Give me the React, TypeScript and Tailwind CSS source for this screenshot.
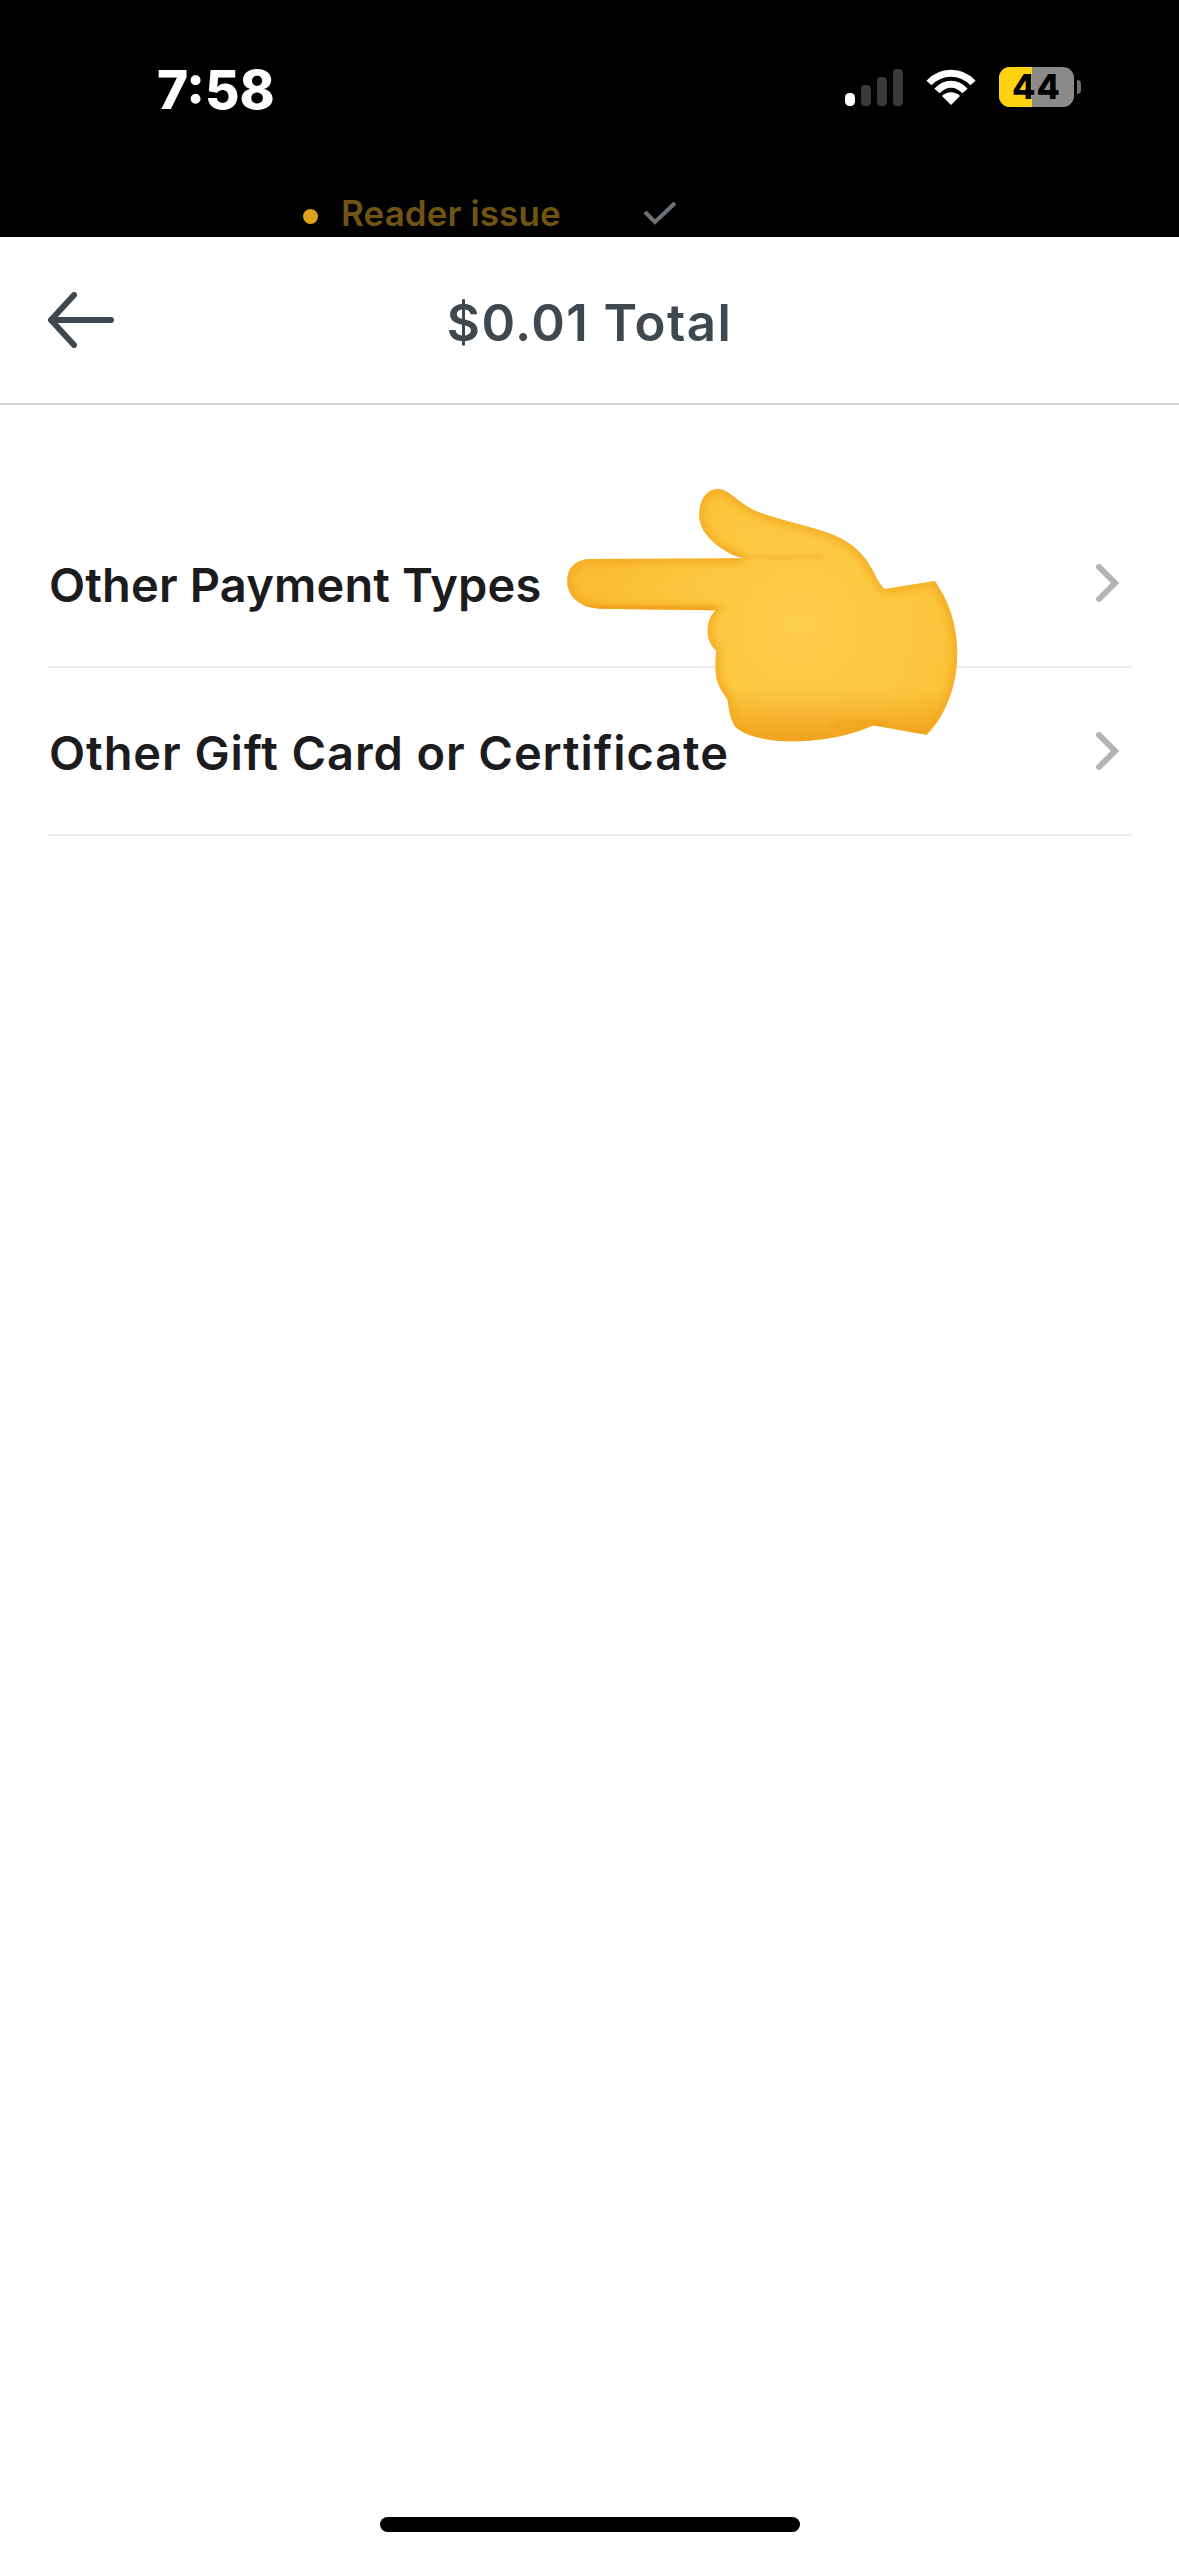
const font = { fontFamily: 'Inter, sans-serif' }

function SignalIcon() {
  return (
    <svg width="58" height="37" viewBox="0 0 58 37">
      <rect x="0" y="24" width="10" height="13" rx="4.5" fill="#fff" />
      <rect x="16" y="16" width="10" height="21" rx="4" fill="#3a3a3a" />
      <rect x="32" y="8" width="10" height="29" rx="4" fill="#3a3a3a" />
      <rect x="48" y="0" width="10" height="37" rx="4" fill="#3a3a3a" />
    </svg>
  )
}

function WifiIcon() {
  return (
    <svg width="50" height="36" viewBox="0 0 50 36" fill="none">
      <path d="M3 14 C15 1 35 1 47 14" stroke="#fff" strokeWidth="7" />
      <path d="M11 22 C19 13 31 13 39 22" stroke="#fff" strokeWidth="7" />
      <path d="M25 36 L16 27 C21 22 29 22 34 27 Z" fill="#fff" />
    </svg>
  )
}

function Battery() {
  return (
    <div className="flex items-center gap-[3px]">
      <div className="relative flex h-[40px] w-[75px] items-center justify-center overflow-hidden rounded-[11px] bg-[#8a8a8a]">
        <div className="absolute inset-y-0 left-0 w-[33px] bg-[#fdd20f]" />
        <span className="relative text-[34px] leading-none font-extrabold tracking-[1px] text-black" style={font}>44</span>
      </div>
      <div className="h-[14px] w-[4px] rounded-r-full bg-[#6f6f6f]" />
    </div>
  )
}

function PointingHand() {
  const outline = 'M82 365C82 325 105 300 150 298L610 296C570 285 530 262 500 225C484 205 478 185 478 165C478 115 505 88 535 88C570 90 590 125 640 150C700 178 800 195 880 225C940 250 975 285 1000 335C1010 355 1020 375 1035 388L1185 364C1225 420 1250 490 1252 570C1255 670 1220 765 1160 825L1000 797C940 825 850 845 760 845C700 845 620 835 585 800C570 775 568 750 563 722C555 705 540 690 532 665C526 640 525 600 530 575C515 560 503 540 503 515C503 490 510 470 527 452L180 447C120 445 82 410 82 365Z'
  return (
    <svg className="absolute top-[489px] left-[567px]" width="391" height="253" viewBox="82 88 1172 759">
      <defs>
        <radialGradient id="palm" gradientUnits="userSpaceOnUse" cx="780" cy="500" r="620">
          <stop offset="0" stopColor="#fecd4a" />
          <stop offset="0.6" stopColor="#fcc63e" />
          <stop offset="1" stopColor="#fabd33" />
        </radialGradient>
        <linearGradient id="bottom" x1="0" y1="0" x2="0" y2="1">
          <stop offset="0.78" stopColor="#f2a31f" stopOpacity="0" />
          <stop offset="1" stopColor="#ee9a19" stopOpacity="0.8" />
        </linearGradient>
        <filter id="soft" x="-10%" y="-10%" width="120%" height="120%">
          <feGaussianBlur stdDeviation="12" />
        </filter>
        <clipPath id="hand">
          <path d={outline} />
        </clipPath>
      </defs>
      <path d={outline} fill="url(#palm)" />
      <path d={outline} fill="url(#bottom)" />
      <g clipPath="url(#hand)">
        <path d={outline} fill="none" stroke="#f2a41f" strokeWidth="20" filter="url(#soft)" />
        {/* finger underside, thumb crease and the shadow where the wrist starts */}
        <path d="M120 440L527 452" fill="none" stroke="#f09c18" strokeWidth="22" filter="url(#soft)" />
        <path d="M600 290C680 302 760 302 850 285" fill="none" stroke="#f3a925" strokeWidth="12" filter="url(#soft)" />
        <path d="M1040 815C1000 780 950 775 880 800" fill="none" stroke="#f0a41e" strokeWidth="30" filter="url(#soft)" />
      </g>
    </svg>
  )
}

function Chevron() {
  return (
    <svg className="mr-[13px]" width="24" height="40" viewBox="0 0 24 40" fill="none">
      <path d="M4 4L20 20L4 36" stroke="#b4b4b4" strokeWidth="6" strokeLinecap="round" strokeLinejoin="miter" />
    </svg>
  )
}

function Row({ label, tracking }: { label: string; tracking: string }) {
  return (
    <div className="flex h-[168px] items-center justify-between border-b-2 border-[#ececec]">
      <span className={`mt-[3px] text-[47px] leading-none font-semibold text-[#1c1c1e] ${tracking}`} style={font}>{label}</span>
      <Chevron />
    </div>
  )
}

export default function App() {
  return (
    <div className="relative flex h-[2556px] w-[1179px] flex-col overflow-hidden bg-white" style={font}>
      <header className="h-[237px] bg-black">
        <div className="flex items-start justify-between pt-[67px] pr-[98px] pl-[157px]">
          <span className="text-[53px] leading-[46px] font-extrabold text-white">7:58</span>
          <div className="flex items-center gap-[23px]">
            <SignalIcon />
            <WifiIcon />
            <Battery />
          </div>
        </div>
        <div className="mt-[82px] flex items-center pl-[303px]">
          <div className="mt-[6px] h-[15px] w-[15px] rounded-full bg-[#e0a11f]" />
          <span className="ml-[23px] text-[35px] leading-[36px] font-semibold tracking-[0.1px] text-[#6f5415]">Reader issue</span>
          <svg className="ml-[82px]" width="34" height="24" viewBox="0 0 34 24" fill="none">
            <path d="M2 11L12 21L32 2" stroke="#6b7278" strokeWidth="4" />
          </svg>
        </div>
      </header>

      <nav className="relative flex h-[168px] items-center justify-center border-b-2 border-[#d4d4d4]">
        <svg className="absolute top-[55px] left-[48px]" width="68" height="56" viewBox="0 0 68 56" fill="none">
          <path d="M26 3L3 28L26 53M3 28H63" stroke="#3f474f" strokeWidth="6" strokeLinecap="round" strokeLinejoin="round" />
        </svg>
        <h1 className="mt-[5px] text-[51px] leading-none font-semibold tracking-[1.4px] text-[#3f474f]">$0.01 Total</h1>
      </nav>

      <div className="pt-[95px] pr-[47px] pl-[49px]">
        <Row label="Other Payment Types" tracking="tracking-[0.15px]" />
        <Row label="Other Gift Card or Certificate" tracking="tracking-[0.92px]" />
      </div>

      <PointingHand />

      <div className="absolute bottom-[24px] left-1/2 h-[15px] w-[420px] -translate-x-1/2 rounded-full bg-black" />
    </div>
  )
}
